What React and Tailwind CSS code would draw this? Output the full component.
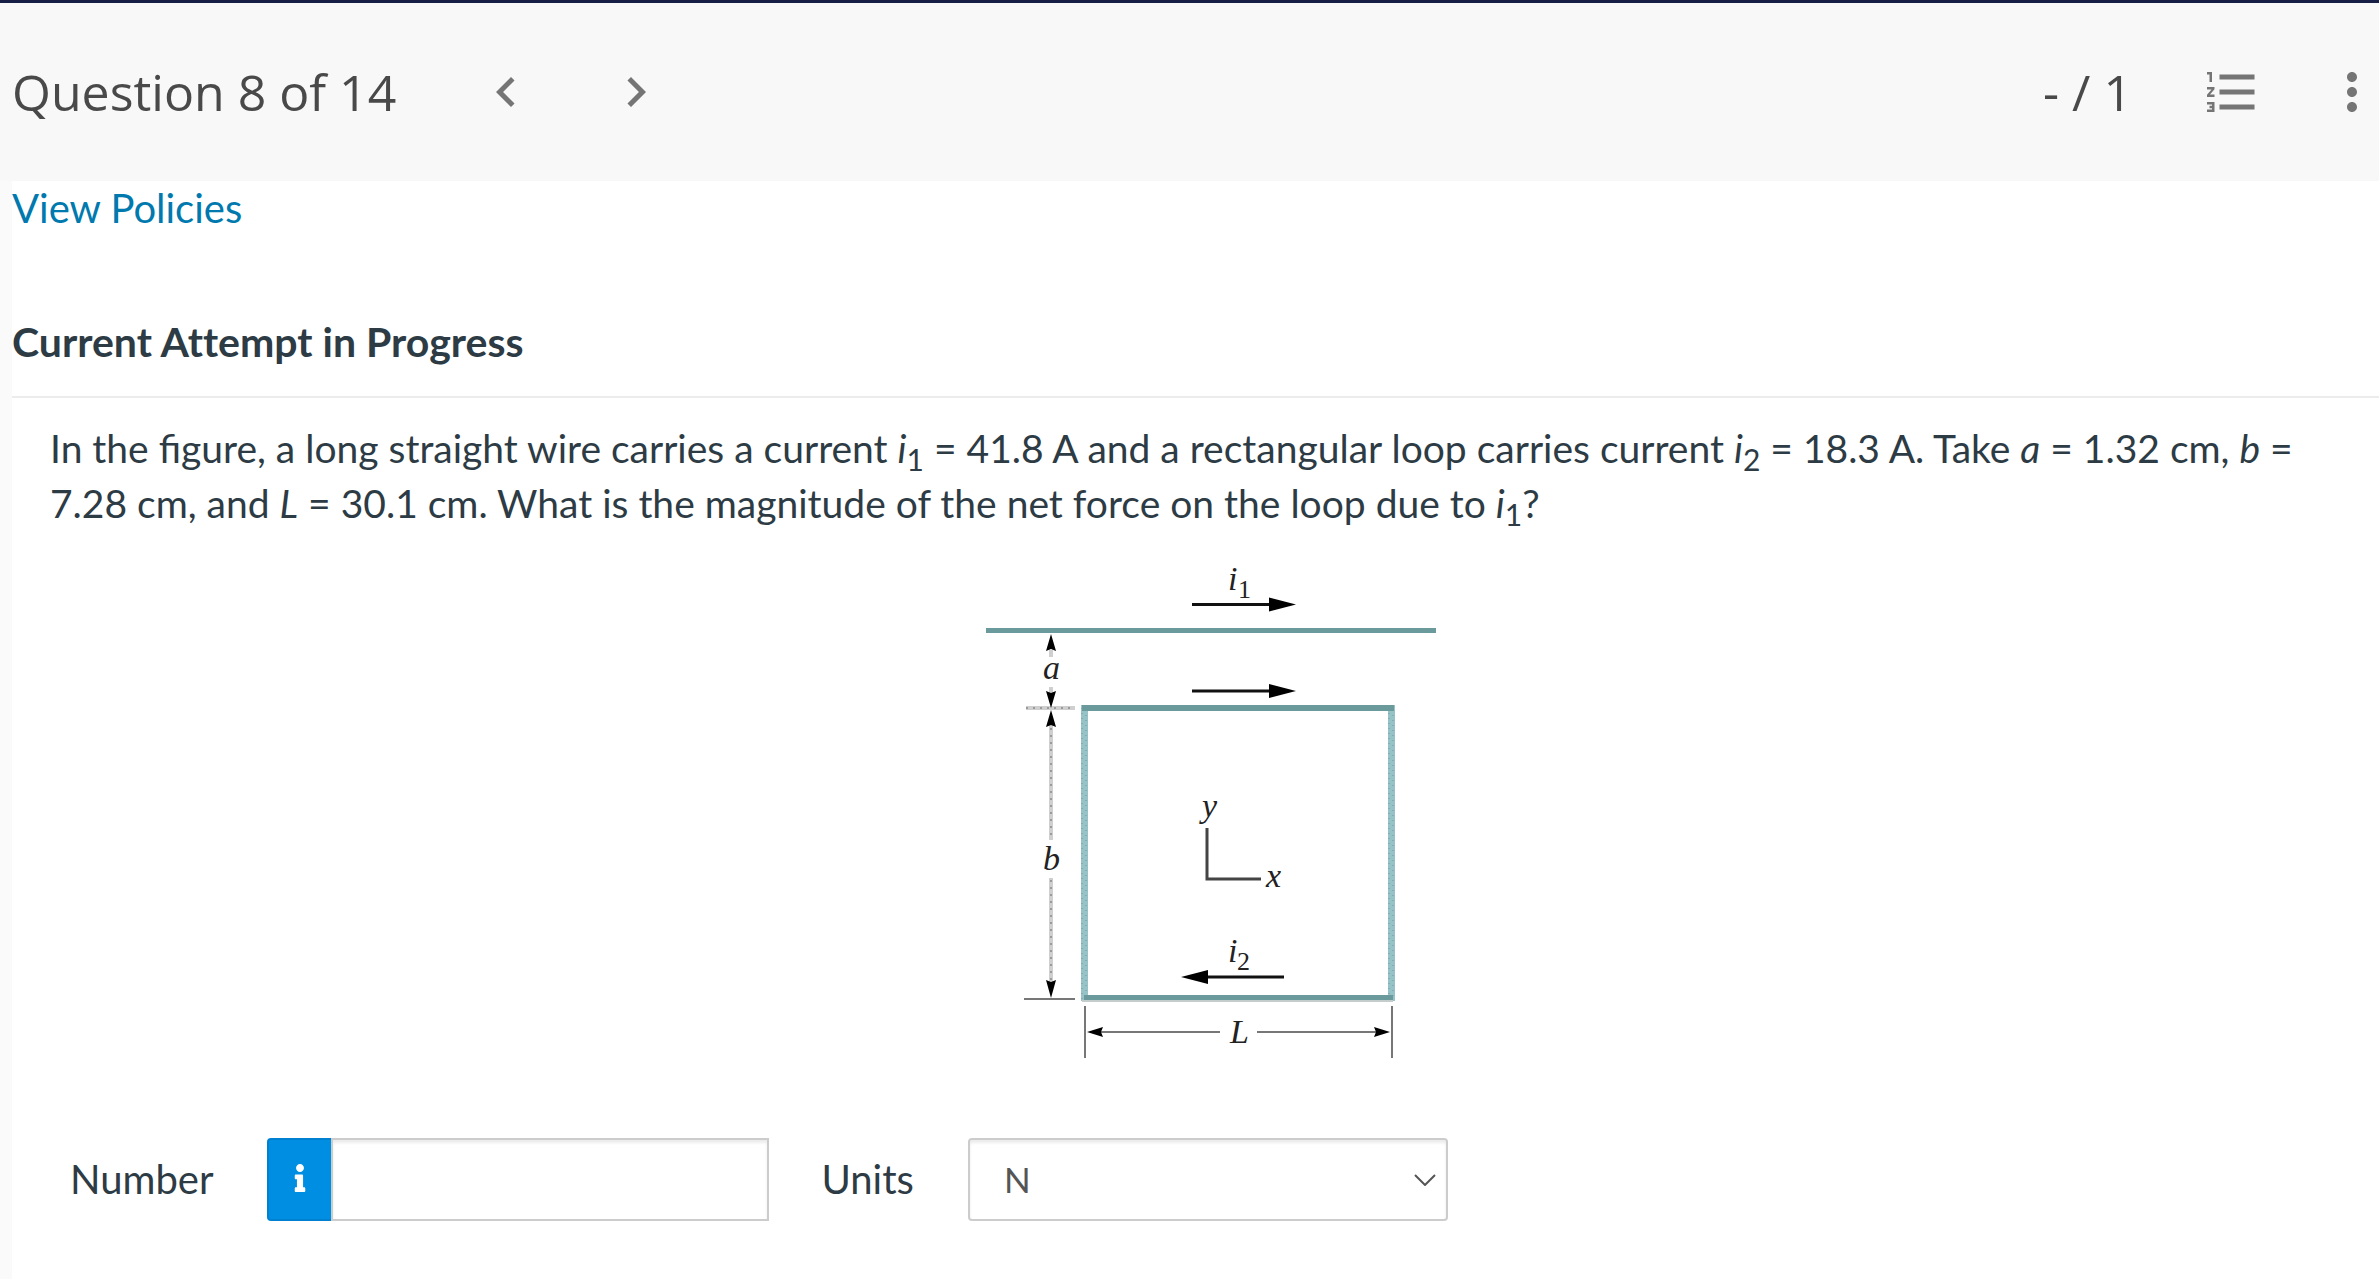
import { useState } from 'react';
import { MdChevronLeft, MdChevronRight, MdFormatListNumbered, MdMoreVert } from 'react-icons/md';
import { FaInfo } from 'react-icons/fa';

const UNITS = ['N', 'N·m', 'T', 'A', 'm'];

function Header() {
  return (
    <header className="flex items-center justify-between overflow-hidden border-t-3 border-[#181f47] bg-[#f8f8f8] h-[181px] pl-3 font-['Open_Sans',sans-serif] text-[50px] text-[#494949]">
      <div className="flex items-center">
        <h1>Question 8 of 14</h1>
        <nav className="ml-20 flex gap-[70px] text-[60px] text-[#757575]">
          <button type="button" aria-label="Previous question">
            <MdChevronLeft />
          </button>
          <button type="button" aria-label="Next question">
            <MdChevronRight />
          </button>
        </nav>
      </div>

      <div className="-mr-[3px] flex items-center gap-[60px] text-[#757575]">
        <span className="mr-2.5 text-[#494949]">- / 1</span>
        <button type="button" aria-label="Question list" className="text-[60px]">
          <MdFormatListNumbered />
        </button>
        <button type="button" aria-label="More options" className="text-[60px]">
          <MdMoreVert />
        </button>
      </div>
    </header>
  );
}

// Long wire carrying i1 above a rectangular loop carrying i2
function LoopFigure() {
  return (
    <svg
      viewBox="0 -6 457 506"
      className="mx-auto w-[457px] font-['Liberation_Serif',serif] text-[34px] italic"
      role="img"
      aria-label="Wire and rectangular loop"
    >
      {/* Wire */}
      <rect x="0" y="68" width="450" height="5" fill="#6a9a9b" />

      {/* Current arrows */}
      <g stroke="#111" strokeWidth="3">
        <path d="M206 44.5H286M206 131H286" />
        <path d="M218 417H298" />
      </g>
      <g fill="#000">
        <path d="M283 37.5L310 44.5L283 51.5Z" />
        <path d="M283 124L310 131L283 138Z" />
        <path d="M222 410L195 417L222 424Z" />
      </g>

      {/* Loop */}
      <g fill="#96c4c6">
        <rect x="95" y="145" width="7" height="296" />
        <rect x="402" y="145" width="7" height="296" />
      </g>
      <g stroke="#7d8fae" strokeWidth="1" strokeDasharray="1 4">
        <path d="M96 148V440M100 150V440M403 148V440M407 150V440" />
      </g>
      <rect x="96" y="145" width="312" height="6" fill="#6a9a9b" />
      <rect x="98" y="435" width="309" height="5" fill="#6a9a9b" />
      <rect x="96" y="440" width="311" height="2" fill="#c4cccc" />

      {/* Distances a and b */}
      <g stroke="#cfcfcf" strokeWidth="4">
        <path d="M65 90V97M65 127V133M65 165V280M65 318V422" />
        <path d="M40 148H89" />
      </g>
      <g stroke="#666" strokeWidth="1" strokeDasharray="2 5">
        <path d="M65 168V280M65 320V422M40 148H89" />
      </g>
      <path d="M38 439H89" stroke="#777" strokeWidth="2" />
      <g fill="#000">
        <path d="M65 74L70 91L65 89L60 91Z" />
        <path d="M65 148L70 131L65 133L60 131Z" />
        <path d="M65 150L70 167L65 165L60 167Z" />
        <path d="M65 438L70 420L65 422L60 420Z" />
      </g>

      {/* Length L */}
      <g stroke="#777" strokeWidth="2">
        <path d="M99 446V498M406 446V498" />
        <path d="M112 472H234M271 472H394" />
      </g>
      <g fill="#000">
        <path d="M101 472L117 467L115 472L117 477Z" />
        <path d="M404 472L388 467L390 472L388 477Z" />
      </g>

      {/* Axes */}
      <path d="M221 268V319H275" fill="none" stroke="#444" strokeWidth="3" />

      <g fill="#222">
        <text x="242" y="30">i</text>
        <text x="252" y="38" className="text-[26px] not-italic">1</text>
        <text x="57" y="119">a</text>
        <text x="57" y="310">b</text>
        <text x="216" y="257">y</text>
        <text x="280" y="327">x</text>
        <text x="242" y="402">i</text>
        <text x="251" y="410" className="text-[26px] not-italic">2</text>
        <text x="244" y="483">L</text>
      </g>
    </svg>
  );
}

function AnswerRow() {
  const [value, setValue] = useState('');
  const [unit, setUnit] = useState('N');

  return (
    <form className="mt-[78px] flex items-center pl-5" onSubmit={(e) => e.preventDefault()}>
      <label htmlFor="answer">Number</label>
      <div className="ml-[54px] flex h-[83px]">
        <button
          type="button"
          aria-label="Answer information"
          className="flex w-16 items-center justify-center rounded-l border-y-2 border-l-2 border-[#0080d0] bg-[#008ee2] pb-1 text-[28px] text-white"
        >
          <FaInfo />
        </button>
        <input
          id="answer"
          type="text"
          value={value}
          onChange={(e) => setValue(e.target.value)}
          className="w-[438px] border-2 border-[#ccc] bg-white px-6 text-[#555] shadow-[inset_0_3px_3px_rgba(0,0,0,0.08)] outline-none"
        />
      </div>

      <label htmlFor="units" className="ml-[52px]">Units</label>
      <div className="relative ml-[54px]">
        <select
          id="units"
          value={unit}
          onChange={(e) => setUnit(e.target.value)}
          className="block h-[83px] w-[480px] appearance-none rounded border-2 border-[#ccc] bg-white px-[34px] text-[35px] text-[#555] shadow-[inset_0_3px_3px_rgba(0,0,0,0.08)] outline-none"
        >
          {UNITS.map((u) => (
            <option key={u} value={u}>{u}</option>
          ))}
        </select>
        <svg
          viewBox="0 0 22 12"
          className="pointer-events-none absolute top-9 right-3 h-3 w-[22px]"
          fill="none"
          stroke="#555"
          strokeWidth="2"
        >
          <path d="M1 1L11 11L21 1" />
        </svg>
      </div>
    </form>
  );
}

export default function App() {
  return (
    <div className="min-h-screen bg-[#fafafa] font-['Lato',sans-serif] text-[40px] leading-[55px] text-[#2d3b45]">
      <Header />

      <main className="ml-3 min-h-[calc(100vh-181px)] bg-white">
        <a href="#policies" className="text-[#0079ae]">View Policies</a>

        <h2 className="mt-[78px] border-b-2 border-[#ececec] pb-[27px] text-[41px] leading-[55px] font-bold [font-variant-ligatures:none]">
          Current Attempt in Progress
        </h2>

        <section className="pt-[23px] pl-[38px]">
          <p className="pr-8 text-[39px] leading-[55px]">
            In the figure, a long straight wire carries a current <i>i</i>
            <sub className="text-[30px]">1</sub> = 41.8 A and a rectangular loop carries current{' '}
            <i>i</i>
            <sub className="text-[30px]">2</sub> = 18.3 A. Take <i>a</i> = 1.32 cm, <i>b</i> = 7.28
            cm, and <i>L</i> = 30.1 cm. What is the magnitude of the net force on the loop due to{' '}
            <i>i</i>
            <sub className="text-[30px]">1</sub>?
          </p>

          <div className="pt-[23px]">
            <LoopFigure />
          </div>

          <AnswerRow />
        </section>
      </main>
    </div>
  );
}
